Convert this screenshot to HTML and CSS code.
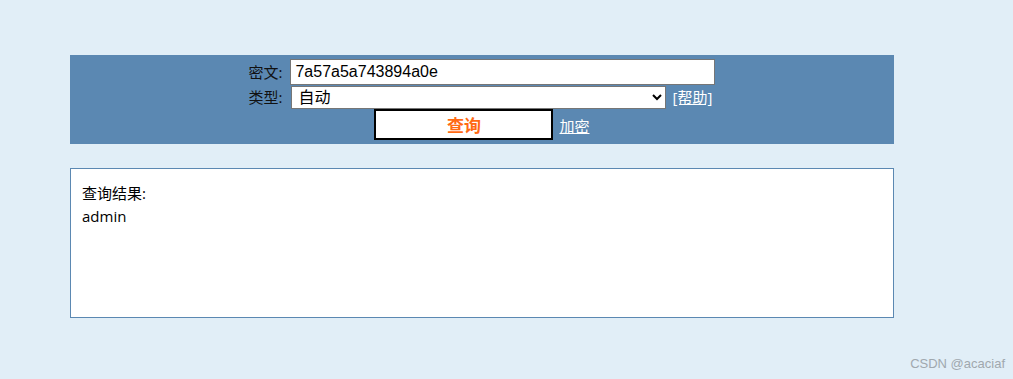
FILE: index.html
```html
<html>
<head>
<meta charset="utf-8">
<link rel="stylesheet" href="styles.css">
</head>
<body>
<div class="wrap">
  <form class="query">
    <div class="grid">
      <label class="lbl">密文:</label>
      <div class="cell"><input type="text" class="txt" value="7a57a5a743894a0e"></div>
      <label class="lbl">类型:</label>
      <div class="cell">
        <select class="sel"><option>自动</option></select>
        <a href="#" class="lnk">[帮助]</a>
      </div>
      <div class="btnRow"><button type="button" class="btn">查询</button><a href="#" class="lnk">加密</a></div>
    </div>
  </form>
  <div class="result">
    <div>查询结果:</div>
    <div>admin</div>
  </div>
</div>
<div class="mark">CSDN @acaciaf</div>
</body>
</html>
```
FILE: styles.css
```css
body {
    margin: 0;
    background-color: #e1eef7;
    font-family: "Open Sans", "Noto Sans CJK SC", sans-serif;
    font-size: 15px;
    color: #000;
}

.wrap {
    width: 824px;
    margin: 55px 0 0 70px;
}

.query {
    margin: 0;
    padding: 4px 0 4px 0;
    background-color: #5b88b2;
}

.grid {
    display: grid;
    grid-template-columns: auto auto;
    justify-content: center;
    column-gap: 8px;
    align-items: center;
}

.lbl {
    text-align: right;
    color: #111;
    line-height: 20px;
}

.cell {
    display: flex;
    align-items: center;
}

.txt {
    width: 425px;
    height: 26px;
    margin: 0;
    padding: 0 4px;
    border: 1px solid #767676;
    font-family: "Liberation Sans", sans-serif;
    font-size: 16px;
    box-sizing: border-box;
}

.sel {
    width: 375px;
    height: 23px;
    margin: 1px 0 0 1px;
    padding: 0 2px;
    border: 1px solid #767676;
    background: #fff;
    font-family: "Liberation Sans", "Noto Sans CJK SC", sans-serif;
    font-size: 16px;
    box-sizing: border-box;
}

.lnk {
    color: #fff;
    margin-left: 6px;
    font-size: 15px;
    line-height: 20px;
}

.btnRow {
    grid-column: 1 / 3;
    text-align: center;
}

.btn {
    width: 179px;
    height: 31px;
    margin: 0;
    border: 2px solid #000;
    background: #fff;
    color: #ff6a13;
    font-family: "Liberation Sans", "Noto Sans CJK SC", sans-serif;
    font-size: 17px;
    font-weight: bold;
    vertical-align: baseline;
}

.result {
    margin-top: 24px;
    height: 150px;
    box-sizing: border-box;
    padding: 13px 11px;
    background: #fff;
    border: 1px solid #5b88b2;
    line-height: 23px;
}

.mark {
    position: absolute;
    right: 8px;
    top: 356px;
    color: #a0a8ae;
    font-family: "Liberation Sans", sans-serif;
    font-size: 13px;
}
```
